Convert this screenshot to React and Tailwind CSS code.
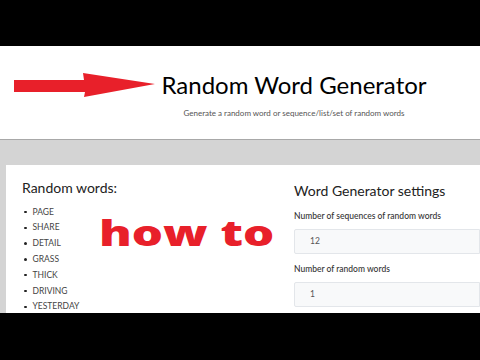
// Random Word Generator thumbnail
const words = ['PAGE', 'SHARE', 'DETAIL', 'GRASS', 'THICK', 'DRIVING', 'YESTERDAY'];

const Arrow = () => (
  <svg className="absolute left-[14px] top-[27px]" width="142" height="25" viewBox="0 0 142 25">
    <polygon points="0,7 70,7 69,0 141,11 70,24 71,19 0,19" fill="#e8202a" />
  </svg>
);

const Field = ({ label, value }) => (
  <div className="flex flex-col">
    <div className="text-[8.5px] leading-[10px] text-[#333] font-medium">{label}</div>
    <div className="mt-[8px] h-[25px] bg-[#f8f9fa] border border-[#e3e6ea] rounded-l-[2px] flex items-center pl-[15px] text-[8.5px] text-[#555]">
      {value}
    </div>
  </div>
);

export default function App() {
  return (
    <div className="w-[480px] h-[360px] flex flex-col overflow-hidden bg-black" style={{ fontFamily: 'Lato, "Open Sans", sans-serif' }}>
      <div className="h-[46px] bg-black" />

      {/* header */}
      <div className="relative h-[94px] bg-white border-b border-[#a8a8a8] flex flex-col items-center pl-[108px]">
        <Arrow />
        <h1 className="mt-[24px] text-[24px] leading-[30px] text-black">Random Word Generator</h1>
        <p className="mt-[8px] text-[8px] leading-[10px] text-[#555]">
          Generate a random word or sequence/list/set of random words
        </p>
      </div>

      <div className="h-[25px] bg-[#d4d4d4]" />

      {/* main card */}
      <div className="relative h-[148px] bg-[#d4d4d4] pl-[6px]">
        <div className="h-full bg-white grid grid-cols-[288px_1fr]">
          <div className="pl-[16px] pt-[14px]">
            <h2 className="text-[14px] leading-[18px] text-[#222]">Random words:</h2>
            <ul className="mt-[10px] flex flex-col gap-[5.8px]">
              {words.map((w) => (
                <li key={w} className="flex items-center h-[10px] text-[8.5px] text-[#444]">
                  <span className="w-[2.5px] h-[2.5px] rounded-full bg-[#222] ml-[2px] mr-[6px]" />
                  {w}
                </li>
              ))}
            </ul>
          </div>
          <div className="pt-[17px] flex flex-col">
            <h2 className="text-[14px] leading-[18px] text-[#222]">Word Generator settings</h2>
            <div className="mt-[11px] flex flex-col gap-[10px]">
              <Field label="Number of sequences of random words" value="12" />
              <Field label="Number of random words" value="1" />
            </div>
          </div>
        </div>
        <div
          className="absolute left-[99px] top-[48px] text-[35px] leading-[40px] font-extrabold text-[#e8202a] origin-left scale-x-[1.4]"
          style={{ fontFamily: '"Open Sans", Arial, sans-serif' }}
        >
          how to
        </div>
      </div>

      <div className="flex-1 bg-black" />
    </div>
  );
}
